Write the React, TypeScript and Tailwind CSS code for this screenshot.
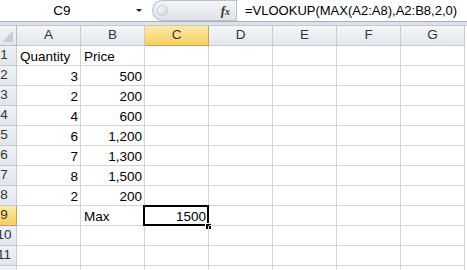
const cols = ["A", "B", "C", "D", "E", "F", "G"];

type Cell = { text: string; align?: "left" | "right" };

const rows: Record<number, Record<string, Cell>> = {
  1: { A: { text: "Quantity" }, B: { text: "Price" } },
  2: { A: { text: "3", align: "right" }, B: { text: "500", align: "right" } },
  3: { A: { text: "2", align: "right" }, B: { text: "200", align: "right" } },
  4: { A: { text: "4", align: "right" }, B: { text: "600", align: "right" } },
  5: { A: { text: "6", align: "right" }, B: { text: "1,200", align: "right" } },
  6: { A: { text: "7", align: "right" }, B: { text: "1,300", align: "right" } },
  7: { A: { text: "8", align: "right" }, B: { text: "1,500", align: "right" } },
  8: { A: { text: "2", align: "right" }, B: { text: "200", align: "right" } },
  9: { B: { text: "Max" }, C: { text: "1500", align: "right" } },
};

export default function App() {
  return (
    <div className="w-[467px] h-[270px] overflow-hidden bg-white text-black font-['Liberation_Sans',Arial,sans-serif]">
      {/* ── Formula bar ── */}
      <div className="flex h-[22px] border-b border-[#a7b0bc]">
        <div className="flex w-[152px] items-center">
          <div className="w-[124px] text-center text-[13.5px] leading-none">C9</div>
          <div className="flex flex-1 justify-center pl-[2px]">
            <span className="block w-0 h-0 border-l-[3px] border-r-[3px] border-t-[3px] border-l-transparent border-r-transparent border-t-[#222]" />
          </div>
        </div>
        <div className="flex w-[84px] items-center rounded-l-full border-l border-y border-[#b9c1cc] bg-gradient-to-b from-[#f3f5f8] to-[#dfe3e9]">
          <div className="ml-[4px] w-[11px] h-[11px] rounded-full bg-gradient-to-br from-white to-[#cfd5dd] border border-[#c3cad3]" />
          <span className="ml-auto mr-[6px] font-['Liberation_Serif',serif] italic font-bold text-[13px] text-[#333] leading-none">
            f<span className="text-[10px]">x</span>
          </span>
        </div>
        <div className="flex flex-1 items-center border-l border-[#b9c1cc] pl-[8px] text-[13px] leading-none whitespace-nowrap">
          =VLOOKUP(MAX(A2:A8),A2:B8,2,0)
        </div>
      </div>
      <div className="h-[4px] bg-[#dde2e8] border-b border-[#c2c9d2]" />

      {/* ── Grid ── */}
      <div className="grid grid-cols-[17px_repeat(7,64px)_1fr] text-[13.5px]">
        {/* header row */}
        <div className="relative h-[20px] border-r border-b border-[#b4bcc7] bg-gradient-to-b from-[#f2f4f7] to-[#e2e6ec]">
          <svg className="absolute right-[3px] bottom-[3px]" width="11" height="11" viewBox="0 0 11 11">
            <polygon points="11,0 11,11 0,11" fill="#c8ced6" />
          </svg>
        </div>
        {cols.map((c) => (
          <div
            key={c}
            className={
              c === "C"
                ? "flex h-[20px] items-center justify-center border-r border-b border-[#c9a54a] bg-gradient-to-b from-[#fdeaa6] to-[#f6cf60] text-[#333]"
                : "flex h-[20px] items-center justify-center border-r border-b border-[#c5cbd3] bg-gradient-to-b from-[#f4f6f8] to-[#e3e7ec] text-[#333]"
            }
          >
            {c}
          </div>
        ))}
        <div className="h-[20px] bg-white" />

        {Array.from({ length: 12 }, (_, i) => i + 1).map((r) => (
          <Row key={r} r={r} />
        ))}
      </div>
    </div>
  );
}

function Row({ r }: { r: number }) {
  const data = rows[r] || {};
  const sel = r === 9;
  return (
    <>
      <div
        className={
          sel
            ? "h-[20px] overflow-hidden border-r border-b border-[#c9a54a] bg-gradient-to-b from-[#fdeaa6] to-[#f6cf60] text-[#333]"
            : "h-[20px] overflow-hidden border-r border-b border-[#c5cbd3] bg-gradient-to-b from-[#eef1f5] to-[#e2e6ec] text-[#333]"
        }
      >
        <div className="ml-[-9px] w-[26px] h-full flex items-center justify-center">{r}</div>
      </div>
      {cols.map((c) => {
        const cell = data[c];
        const active = sel && c === "C";
        return (
          <div
            key={c}
            className={
              cell?.align === "right"
                ? "relative flex h-[20px] items-end justify-end pr-[2px] pb-[2px] border-r border-b border-[#d4d4d4] leading-none whitespace-nowrap"
                : "relative flex h-[20px] items-end pl-[3px] pb-[2px] border-r border-b border-[#d4d4d4] leading-none whitespace-nowrap"
            }
          >
            {cell?.text}
            {active && (
              <>
                <div className="absolute left-[-2px] top-[-1px] w-[66px] h-[21px] border-2 border-black" />
                <div className="absolute right-[-4px] bottom-[-5px] w-[7px] h-[7px] bg-black border border-white" />
              </>
            )}
          </div>
        );
      })}
      <div className="h-[20px] bg-white" />
    </>
  );
}
